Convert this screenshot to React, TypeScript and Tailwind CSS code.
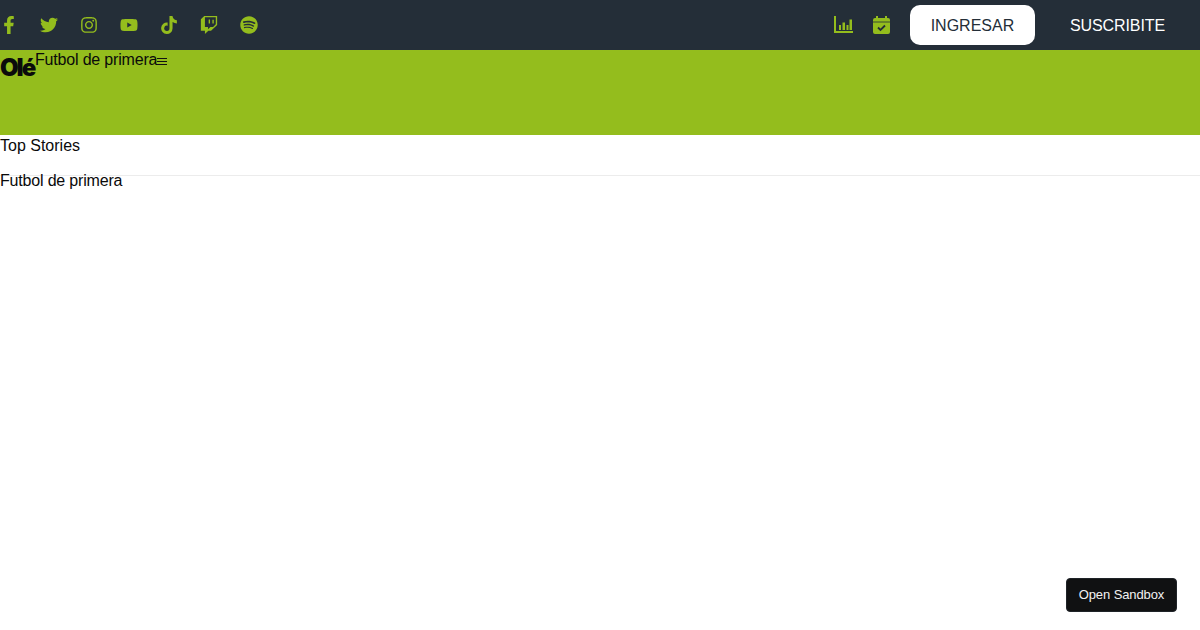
import React from "react";
import { FaFacebookF, FaTwitter, FaInstagram, FaYoutube, FaTiktok, FaTwitch, FaSpotify } from "react-icons/fa";

const socials = [FaFacebookF, FaTwitter, FaInstagram, FaYoutube, FaTiktok, FaTwitch, FaSpotify];

export default function App() {
  return (
    <div className="relative h-[630px] w-[1200px] overflow-hidden bg-white font-['Liberation_Sans',Arial,sans-serif] text-base leading-[18px] text-[#0a0a0a]">
      <header className="flex h-[50px] items-center justify-between bg-[#242e38] pr-[35px]">
        <div className="flex items-center gap-[22px]">
          {socials.map((I, i) => (
            <I key={i} size={18} className="text-[#94bd1d]" />
          ))}
        </div>
        <div className="flex items-center">
          <svg width="19" height="18" viewBox="0 0 19 18" className="text-[#94bd1d]">
            <path d="M1 0v16h18" fill="none" stroke="currentColor" strokeWidth="2" />
            <path d="M5 9h2v5H5zM8.500 6.500h2.500v7.500H8.500zM12.500 9h2v5h-2zM15.500 3.500h2.500v10.500h-2.500z" fill="currentColor" />
          </svg>
          <svg width="17" height="18" viewBox="0 0 17 18" className="ml-[20px] text-[#94bd1d]">
            <path d="M3 0h2v2h7V0h2v2h1a2 2 0 0 1 2 2v12a2 2 0 0 1-2 2H2a2 2 0 0 1-2-2V4a2 2 0 0 1 2-2h1z" fill="currentColor" />
            <path d="M0 6h17" stroke="#242e38" strokeWidth="0.8" />
            <path d="M5 11.500l2.500 2.500 4.500-4.500" fill="none" stroke="#242e38" strokeWidth="1.800" />
          </svg>
          <button className="ml-5 h-10 w-[125px] rounded-[10px] bg-white pt-[1px] text-base text-[#242e38]">INGRESAR</button>
          <button className="ml-[35px] pt-[1px] text-base tracking-[-0.1px] text-white">SUSCRIBITE</button>
        </div>
      </header>

      <div className="flex h-[85px] items-start bg-[#94bd1d]">
        <span className="mt-[6px] w-[35px] font-['Inter',sans-serif] text-[24px] leading-6 font-black tracking-[-2px] text-[#0b0b0b]">Olé</span>
        <span className="mt-[1px] tracking-[-0.18px]">Futbol de primera</span>
        <svg width="10" height="9" viewBox="0 0 10 9" className="mt-[7px]">
          <path d="M0 1.500h10M0 4.500h10M0 7.500h10" stroke="#111" strokeWidth="1" />
        </svg>
      </div>

      <div className="pt-[2px]">Top Stories</div>
      <div className="mt-[20px] h-[1px] bg-[#ececec]" />
      <div className="-mt-[4px] tracking-[-0.18px]">Futbol de primera</div>

      <div className="absolute left-[1066px] top-[578px] flex h-[34px] w-[111px] items-center justify-center rounded-[4px] border border-[#1f2328] bg-[#101112] text-[13px] tracking-[-0.1px] text-[#f2f2f2]">
        Open Sandbox
      </div>
    </div>
  );
}
